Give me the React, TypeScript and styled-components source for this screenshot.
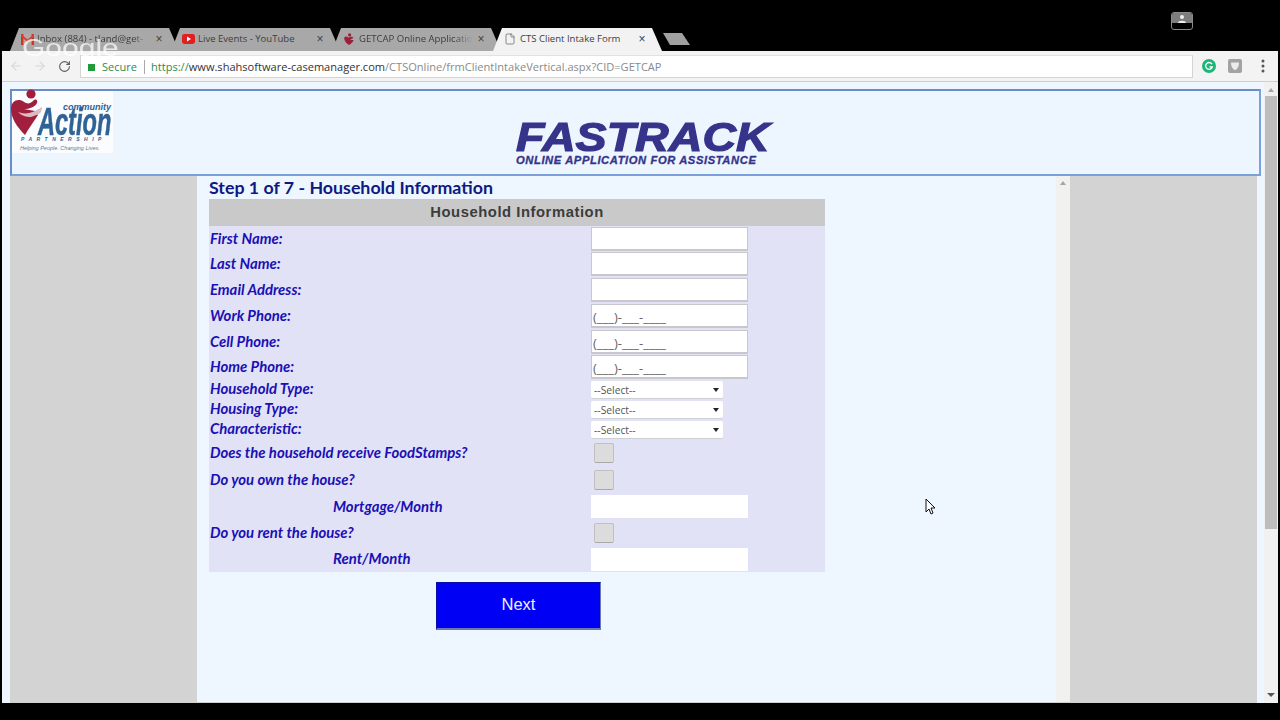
import React from "react";
import styled, { createGlobalStyle } from "styled-components";
import { ArrowLeft, ArrowRight, RotateCw, Star, File } from "lucide-react";

const Global = createGlobalStyle`
  html, body { margin: 0; padding: 0; background: #000; overflow: hidden; }
  * { box-sizing: border-box; }
`;

const Screen = styled.div`
  position: relative;
  width: 1280px;
  height: 720px;
  background: #000;
  display: flex;
  flex-direction: column;
  padding-top: 28px;
  overflow: hidden;
  font-family: "Open Sans", "Liberation Sans", sans-serif;
`;

const Watermark = styled.div`
  position: absolute;
  left: 22px;
  top: 30px;
  font: 400 24px/36px "Liberation Sans", sans-serif;
  transform: scaleX(1.25);
  transform-origin: left center;
  color: rgba(255, 255, 255, 0.72);
`;

const CaptureBadge = styled.svg`
  position: absolute;
  left: 1171px;
  top: 12px;
`;

const Pointer = styled.svg`
  position: absolute;
  left: 925px;
  top: 498px;
`;

const TabStrip = styled.div`
  height: 23px;
  display: flex;
  padding-left: 10px;
  flex: none;
`;

const TabShape = styled.div<{ $active?: boolean }>`
  width: 169px;
  height: 23px;
  margin-right: -8px;
  flex: none;
  display: flex;
  align-items: center;
  padding: 0 15px 1px 10px;
  gap: 3px;
  background: ${(p) => (p.$active ? "#f2f2f2" : "#a8a8a8")};
  clip-path: polygon(0 100%, 9px 0, 159px 0, 169px 100%);
`;

const TabIcon = styled.span`
  width: 14px;
  height: 14px;
  flex: none;
  display: flex;
  align-items: center;
  justify-content: center;
`;

const TabTitle = styled.span<{ $fade?: boolean }>`
  flex: 1;
  min-width: 0;
  font-size: 9.55px;
  line-height: 14px;
  color: #3d3d3d;
  white-space: nowrap;
  overflow: hidden;
  ${(p) =>
    p.$fade &&
    "mask-image: linear-gradient(to right, #000 84%, transparent 100%);"}
`;

const TabClose = styled.span`
  width: 10px;
  font: 400 12px/14px "Liberation Sans", sans-serif;
  color: #444;
  text-align: center;
  flex: none;
`;

const NewTab = styled.div`
  width: 27px;
  height: 12px;
  margin: 5px 0 0 9px;
  background: #a0a0a0;
  clip-path: polygon(0 0, 19px 0, 27px 100%, 7px 100%);
`;

const Browser = styled.div`
  margin: 0 2px;
  height: 652px;
  display: flex;
  flex-direction: column;
  background: #f2f2f2;
`;

const Toolbar = styled.div`
  height: 31px;
  flex: none;
  display: flex;
  align-items: flex-start;
  padding: 4px 0 0 0;
  border-bottom: 1px solid #cfcfcf;
  background: #f3f3f3;
`;

const NavButton = styled.span<{ $dim?: boolean }>`
  width: 24px;
  height: 22px;
  flex: none;
  display: flex;
  align-items: center;
  justify-content: center;
  color: ${(p) => (p.$dim ? "#d8d8d8" : "#5e5e5e")};
`;

const NavGroup = styled.div`
  width: 78px;
  flex: none;
  display: flex;
  padding-left: 2px;
`;

const Omnibox = styled.div`
  width: 1113px;
  height: 23px;
  flex: none;
  background: #fff;
  border: 1px solid #d4d4d4;
  border-top-color: #e2e2e2;
  display: flex;
  align-items: center;
  padding-left: 7px;
`;

const Lock = styled.span`
  width: 7px;
  height: 7px;
  margin-top: 2px;
  background: #1f9b3c;
  flex: none;
`;

const Secure = styled.span`
  font-size: 11px;
  color: #2f8a4e;
  margin-left: 7px;
  width: 34px;
`;

const Divider = styled.span`
  width: 1px;
  height: 14px;
  background: #a9a9a9;
  margin: 0 6px 0 8px;
`;

const UrlBase = styled.span`
  font-size: 11.07px;
  color: #333;
  white-space: nowrap;
`;

const UrlScheme = styled.span`
  color: #2f8a4e;
`;

const UrlRest = styled.span`
  color: #8a8a8a;
`;

const StarSlot = styled.span`
  width: 0;
  margin-left: auto;
  display: flex;
  justify-content: flex-end;
  padding-right: 4px;
  color: #555;
`;

const ExtSlot = styled.div`
  flex: 1;
  display: flex;
  align-items: center;
  height: 22px;
  padding-left: 9px;
  gap: 12px;
`;

const MenuSlot = styled.span`
  margin-left: 7px;
  display: flex;
`;

const Viewport = styled.div`
  flex: 1;
  display: flex;
  min-height: 0;
  background: #eef6ff;
`;

const Page = styled.div`
  flex: 1;
  min-width: 0;
  padding: 7px 3px 0 8px;
  display: flex;
  flex-direction: column;
`;

const Banner = styled.header`
  height: 87px;
  flex: none;
  border: 2px solid #6a8cc9;
  border-bottom-color: #7ba1dc;
  border-right-color: #7ba1dc;
  background: #edf5ff;
  display: flex;
  align-items: flex-start;
`;

const LogoBox = styled.div`
  width: 101px;
  height: 62px;
  flex: none;
  background: #fafcfe;
  display: flex;
  flex-direction: column;
  position: relative;
`;

const LogoHeart = styled.svg`
  position: absolute;
  left: -2px;
  top: -2px;
`;

const LogoCommunity = styled.span`
  font: italic 700 9px/10px "Liberation Sans", sans-serif;
  color: #2f6295;
  margin: 11px 0 0 51px;
  height: 10px;
`;

const LogoAction = styled.span`
  font: italic 700 38px/26px "Liberation Sans", sans-serif;
  color: #2f6295;
  -webkit-text-stroke: 0.5px #2f6295;
  transform: scaleX(0.62);
  transform-origin: left center;
  margin: -3px 0 0 26px;
  white-space: nowrap;
`;

const LogoPartner = styled.span`
  font: italic 700 5px/7px "Liberation Sans", sans-serif;
  color: #2f6295;
  letter-spacing: 4.5px;
  margin: 1px 0 0 9px;
  white-space: nowrap;
`;

const LogoTag = styled.span`
  font: italic 400 5.5px/8px "Liberation Sans", sans-serif;
  color: #5a7aa0;
  margin: 1px 0 0 8px;
  white-space: nowrap;
`;

const TitleBlock = styled.div`
  margin: 31px 0 0 403px;
  display: flex;
  flex-direction: column;
`;

const FastTrack = styled.span`
  font: italic 700 40px/31px "Liberation Sans", sans-serif;
  color: #35348a;
  -webkit-text-stroke: 1.2px #35348a;
  transform: scaleX(1.165);
  transform-origin: left center;
  white-space: nowrap;
`;

const FastSub = styled.span`
  font: italic 700 11.2px/12px "Liberation Sans", sans-serif;
  color: #35348a;
  letter-spacing: 0.6px;
  -webkit-text-stroke: 0.3px #35348a;
  margin-top: 1px;
  white-space: nowrap;
`;

const Columns = styled.div`
  flex: 1;
  min-height: 0;
  display: grid;
  grid-template-columns: 187px 859px 14px 187px;
  margin-right: 4px;
  border-bottom: 1px solid #cfcfcf;
`;

const SidePanel = styled.div`
  background: #d3d3d3;
`;

const Center = styled.main`
  padding: 0 12px;
  display: flex;
  flex-direction: column;
  align-items: flex-start;
`;

const StepHeading = styled.h1`
  margin: 0;
  height: 23px;
  font: 700 17.8px/22px Lato, sans-serif;
  color: #0d1a82;
`;

const FormTable = styled.div`
  width: 616px;
  background: #e2e2f7;
  display: flex;
  flex-direction: column;
`;

const TableHead = styled.div`
  height: 27px;
  padding-bottom: 2px;
  background: #c9c9c9;
  display: flex;
  align-items: center;
  justify-content: center;
  font: 700 14.8px/18px "Liberation Sans", sans-serif;
  letter-spacing: 0.55px;
  color: #3c3c3c;
`;

const Row = styled.div<{ $h: number }>`
  height: ${(p) => p.$h}px;
  display: grid;
  grid-template-columns: 382px 1fr;
  align-items: center;
`;

const Label = styled.label<{ $indent?: boolean }>`
  font: italic 700 14.9px/18px Lato, sans-serif;
  color: #1a10b4;
  padding-left: ${(p) => (p.$indent ? "124px" : "1px")};
  padding-bottom: 2px;
  white-space: nowrap;
`;

const TextBox = styled.input<{ $flat?: boolean }>`
  width: 157px;
  height: ${(p) => (p.$flat ? "23px" : "24px")};
  display: block;
  background: #fff;
  border: ${(p) => (p.$flat ? "none" : "1px solid #c8c8cc")};
  border-bottom-width: ${(p) => (p.$flat ? "0" : "2px")};
  padding: 3px 1px 0;
  font: 400 13px/18px "Open Sans", sans-serif;
  color: #666;
  outline: none;
`;

const SelectWrap = styled.div`
  position: relative;
  width: 132px;
  height: 18px;
  margin-top: 1px;
  &::after {
    content: "";
    position: absolute;
    right: 4px;
    top: 7px;
    border: 3.5px solid transparent;
    border-top: 4px solid #222;
    border-bottom: none;
  }
`;

const Select = styled.select`
  width: 100%;
  height: 100%;
  display: block;
  appearance: none;
  background: #fff;
  border: none;
  border-radius: 2px;
  border-bottom: 1px solid #cfcfd6;
  padding: 2px 0 0 3px;
  font: 400 10.3px/14px "Open Sans", sans-serif;
  color: #555;
`;

const Check = styled.input`
  appearance: none;
  display: block;
  width: 20px;
  height: 20px;
  margin: 0 0 0 3px;
  background: #dcdcdc;
  border: 1px solid #c0c0c0;
  border-bottom-color: #a9a9a9;
  border-radius: 2px;
`;

const NextButton = styled.button`
  width: 165px;
  height: 48px;
  margin: 10px 0 0 227px;
  padding: 0 0 3px;
  flex: none;
  background: #0000f5;
  border: 1px solid #0d0da8;
  border-right: 1px solid #6a78b0;
  border-bottom: 2px solid #6a78b0;
  color: #eef;
  font: 400 16.5px/20px "Liberation Sans", sans-serif;
`;

const InnerScroll = styled.div`
  background: #f1f1ee;
  display: flex;
  justify-content: center;
  padding-top: 5px;
`;

const UpArrow = styled.span`
  width: 0;
  height: 0;
  border: 3.5px solid transparent;
  border-bottom: 4px solid #a5a5a5;
  border-top: none;
`;

const OuterScroll = styled.div`
  width: 14px;
  flex: none;
  background: #f1f1f1;
  display: flex;
  flex-direction: column;
  align-items: center;
  padding-top: 6px;
`;

const ScrollThumb = styled.div`
  width: 12px;
  height: 433px;
  margin-top: 4px;
  background: #bdbdbd;
`;

const DownArrow = styled.span`
  width: 0;
  height: 0;
  margin-top: auto;
  margin-bottom: 6px;
  border: 4px solid transparent;
  border-top: 4px solid #555;
  border-bottom: none;
`;

const Gmail = () => (
  <svg width="13" height="11" viewBox="0 0 13 11">
    <rect width="13" height="11" fill="#b4a8a8" />
    <path d="M0 0h2.4v11H0zM10.6 0H13v11h-2.4z" fill="#c7372c" />
    <path d="M0 0l6.5 5.5L13 0v2.6L6.5 8 0 2.6z" fill="#d8402f" />
  </svg>
);

const YouTube = () => (
  <svg width="13" height="10" viewBox="0 0 13 10">
    <rect width="13" height="10" rx="2.4" fill="#e02020" />
    <path d="M5 2.5v5l4-2.5z" fill="#fff" />
  </svg>
);

const HeartMark = ({ size = 12 }: { size?: number }) => (
  <svg width={size} height={size} viewBox="0 0 12 12">
    <circle cx="6.6" cy="1.9" r="1.6" fill="#9c1f3c" />
    <path
      d="M1.2 5.2C1.2 3.4 3.2 2.8 4.6 4c.8.7 1.6.4 2.6-.1 1.2-.6 3.1.1 3.4 1.2L7 6.6l3.6.6C10.2 9 8 10.8 6 12 3.6 10.6 1.2 8 1.2 5.2z"
      fill="#9c1f3c"
    />
  </svg>
);

const Grammarly = () => (
  <svg width="14" height="14" viewBox="0 0 14 14">
    <circle cx="7" cy="7" r="7" fill="#1fb578" />
    <path
      d="M10 5.2A3.4 3.4 0 1 0 10.3 8H7.6"
      fill="none"
      stroke="#fff"
      strokeWidth="1.3"
    />
  </svg>
);

const Shield = () => (
  <svg width="14" height="14" viewBox="0 0 14 14">
    <rect width="14" height="14" rx="2" fill="#a3a3a3" />
    <path d="M3 3.4h8c0 4-1.3 6.4-4 7.8C4.3 9.8 3 7.4 3 3.4z" fill="#ececec" />
  </svg>
);

const Dots = () => (
  <svg width="4" height="14" viewBox="0 0 4 14">
    <circle cx="2" cy="2" r="1.5" fill="#555" />
    <circle cx="2" cy="7" r="1.5" fill="#555" />
    <circle cx="2" cy="12" r="1.5" fill="#555" />
  </svg>
);

type Field =
  | { kind: "text"; label: string; h: number; mask?: boolean }
  | { kind: "select"; label: string; h: number }
  | { kind: "check"; label: string; h: number }
  | { kind: "flat"; label: string; h: number };

const fields: Field[] = [
  { kind: "text", label: "First Name:", h: 25 },
  { kind: "text", label: "Last Name:", h: 26 },
  { kind: "text", label: "Email Address:", h: 26 },
  { kind: "text", label: "Work Phone:", h: 26, mask: true },
  { kind: "text", label: "Cell Phone:", h: 25, mask: true },
  { kind: "text", label: "Home Phone:", h: 25, mask: true },
  { kind: "select", label: "Household Type:", h: 20 },
  { kind: "select", label: "Housing Type:", h: 20 },
  { kind: "select", label: "Characteristic:", h: 20 },
  { kind: "check", label: "Does the household receive FoodStamps?", h: 28 },
  { kind: "check", label: "Do you own the house?", h: 26 },
  { kind: "flat", label: "Mortgage/Month", h: 27 },
  { kind: "check", label: "Do you rent the house?", h: 26 },
  { kind: "flat", label: "Rent/Month", h: 26 },
];

const FieldControl = ({ field }: { field: Field }) => {
  if (field.kind === "select") {
    return (
      <SelectWrap>
        <Select defaultValue="--Select--">
          <option>--Select--</option>
        </Select>
      </SelectWrap>
    );
  }
  if (field.kind === "check") return <Check type="checkbox" />;
  if (field.kind === "flat") return <TextBox $flat type="text" />;
  return (
    <TextBox type="text" defaultValue={field.mask ? "(___)-___-____" : ""} />
  );
};

const tabs = [
  { title: "Inbox (884) - tland@get-", icon: <Gmail />, fade: true },
  { title: "Live Events - YouTube", icon: <YouTube /> },
  { title: "GETCAP Online Application", icon: <HeartMark />, fade: true },
  {
    title: "CTS Client Intake Form",
    icon: <File size={12} color="#666" strokeWidth={1.5} />,
    active: true,
  },
];

export default function App() {
  return (
    <Screen>
      <Global />
      <TabStrip>
        {tabs.map((t) => (
          <TabShape key={t.title} $active={t.active}>
            <TabIcon>{t.icon}</TabIcon>
            <TabTitle $fade={t.fade}>{t.title}</TabTitle>
            <TabClose>×</TabClose>
          </TabShape>
        ))}
        <NewTab />
      </TabStrip>
      <Browser>
        <Toolbar>
          <NavGroup>
            <NavButton $dim>
              <ArrowLeft size={14} />
            </NavButton>
            <NavButton $dim>
              <ArrowRight size={14} />
            </NavButton>
            <NavButton>
              <RotateCw size={13} strokeWidth={2} />
            </NavButton>
          </NavGroup>
          <Omnibox>
            <Lock />
            <Secure>Secure</Secure>
            <Divider />
            <UrlBase>
              <UrlScheme>https://</UrlScheme>
              www.shahsoftware-casemanager.com
              <UrlRest>
                /CTSOnline/frmClientIntakeVertical.aspx?CID=GETCAP
              </UrlRest>
            </UrlBase>
            <StarSlot>
              <Star size={13} strokeWidth={2} />
            </StarSlot>
          </Omnibox>
          <ExtSlot>
            <Grammarly />
            <Shield />
            <MenuSlot>
              <Dots />
            </MenuSlot>
          </ExtSlot>
        </Toolbar>
        <Viewport>
          <Page>
            <Banner>
              <LogoBox>
                <LogoHeart width="34" height="46" viewBox="0 0 34 46">
                  <circle cx="21" cy="5" r="4.6" fill="#a11f3d" />
                  <path
                    d="M1 20C1 11 9 9 14 13c3 2 6 2 9-1 3-3 5-1 4 2-2 4-8 6-13 6l11 2 3 4c-4 6-9 13-13 20C7 38 1 29 1 20z"
                    fill="#a11f3d"
                  />
                  <path
                    d="M8 23c5 2 11 2 17-1l7-4c0 3-1 6-3 7l-8 3c-5 0-9-1-13-5z"
                    fill="#dcbcc2"
                  />
                </LogoHeart>
                <LogoCommunity>community</LogoCommunity>
                <LogoAction>Action</LogoAction>
                <LogoPartner>PARTNERSHIP</LogoPartner>
                <LogoTag>Helping People. Changing Lives.</LogoTag>
              </LogoBox>
              <TitleBlock>
                <FastTrack>FASTRACK</FastTrack>
                <FastSub>ONLINE APPLICATION FOR ASSISTANCE</FastSub>
              </TitleBlock>
            </Banner>
            <Columns>
              <SidePanel />
              <Center>
                <StepHeading>Step 1 of 7 - Household Information</StepHeading>
                <FormTable>
                  <TableHead>Household Information</TableHead>
                  {fields.map((f) => (
                    <Row key={f.label} $h={f.h}>
                      <Label
                        $indent={
                          f.label === "Mortgage/Month" ||
                          f.label === "Rent/Month"
                        }
                      >
                        {f.label}
                      </Label>
                      <FieldControl field={f} />
                    </Row>
                  ))}
                </FormTable>
                <NextButton type="button">Next</NextButton>
              </Center>
              <InnerScroll>
                <UpArrow />
              </InnerScroll>
              <SidePanel />
            </Columns>
          </Page>
          <OuterScroll>
            <UpArrow />
            <ScrollThumb />
            <DownArrow />
          </OuterScroll>
        </Viewport>
      </Browser>
      <Watermark>Google</Watermark>
      <CaptureBadge width="22" height="18" viewBox="0 0 22 18">
        <rect x="0.5" y="0.5" width="21" height="17" rx="2.5" fill="#000" stroke="#8a8a8a" />
        <path d="M1 3a2 2 0 0 1 2-2h16a2 2 0 0 1 2 2v8H1z" fill="#7d7d7d" />
        <circle cx="11" cy="5" r="2" fill="#eee" />
        <path d="M7 11c0-3 8-3 8 0z" fill="#eee" />
      </CaptureBadge>
      <Pointer width="12" height="18" viewBox="0 0 12 18">
        <path
          d="M1 1v13l3-3 2 5 2-1-2-5h4z"
          fill="#fff"
          stroke="#111"
          strokeWidth="1"
        />
      </Pointer>
    </Screen>
  );
}
